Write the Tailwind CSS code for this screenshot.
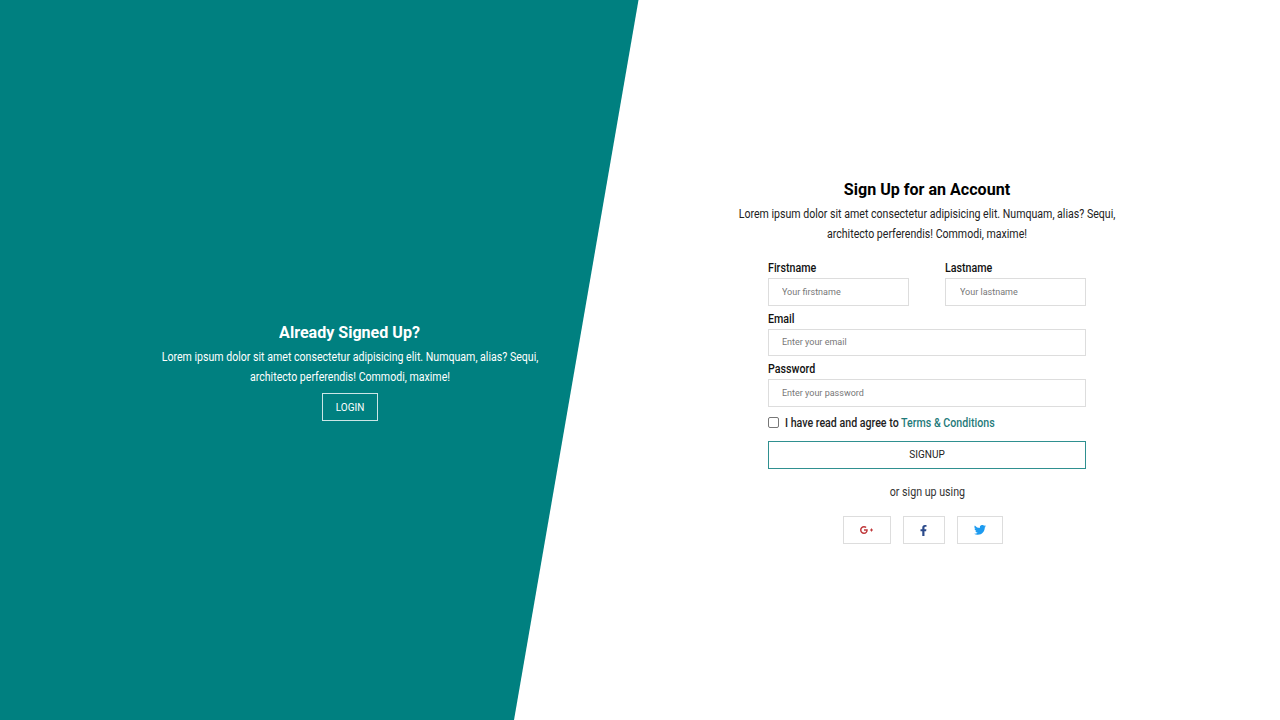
<!DOCTYPE html>
<html>
<head>
<meta charset="utf-8">
<script src="https://cdn.jsdelivr.net/npm/@tailwindcss/browser@4"></script>
</head>
<body class="m-0 bg-white font-['Roboto',sans-serif]">
<div class="relative flex h-[720px] w-[1280px] overflow-hidden bg-white">
  <div class="absolute inset-0 bg-[#008080] [clip-path:polygon(0_0,638.5px_0,514px_720px,0_720px)]"></div>
  <section class="relative flex w-[574px] flex-col items-center pl-[126px] pt-[321px] text-center text-white">
    <h2 class="scale-x-[.945] text-[17px] leading-[22px] font-bold">Already Signed Up?</h2>
    <p class="mt-[4px] w-[434px] shrink-0 scale-x-[.883] text-[12px] leading-[20px]">Lorem ipsum dolor sit amet consectetur adipisicing elit. Numquam, alias? Sequi, architecto perferendis! Commodi, maxime!</p>
    <button class="mt-[6px] h-[28px] w-[56px] border border-white/80 text-[10px] text-white">LOGIN</button>
  </section>
  <section class="relative flex flex-1 flex-col items-center pt-[178px] text-center">
    <h2 class="scale-x-[.945] text-[17px] leading-[22px] font-bold text-black">Sign Up for an Account</h2>
    <p class="mt-[4px] w-[434px] shrink-0 scale-x-[.883] text-[12px] leading-[20px] text-[#222]">Lorem ipsum dolor sit amet consectetur adipisicing elit. Numquam, alias? Sequi, architecto perferendis! Commodi, maxime!</p>
    <form class="mt-[16px] flex w-[318px] flex-col text-left">
      <div class="grid grid-cols-[141px_141px] justify-between">
        <label class="flex flex-col"><span class="origin-left scale-x-[.89] text-[12px] leading-[16px] font-medium text-[#111]">Firstname</span><input class="mt-[2px] h-[27.5px] w-full border border-[#ddd] px-[13px] text-[9px] placeholder:text-[#777]" placeholder="Your firstname"></label>
        <label class="flex flex-col"><span class="origin-left scale-x-[.89] text-[12px] leading-[16px] font-medium text-[#111]">Lastname</span><input class="mt-[2px] h-[27.5px] w-full border border-[#ddd] px-[14px] text-[9px] placeholder:text-[#777]" placeholder="Your lastname"></label>
      </div>
      <label class="mt-[5px] flex flex-col"><span class="origin-left scale-x-[.89] text-[12px] leading-[16px] font-medium text-[#111]">Email</span><input class="mt-[2px] h-[27.5px] w-full border border-[#ddd] px-[13px] text-[9px] placeholder:text-[#777]" placeholder="Enter your email"></label>
      <label class="mt-[5px] flex flex-col"><span class="origin-left scale-x-[.89] text-[12px] leading-[16px] font-medium text-[#111]">Password</span><input class="mt-[2px] h-[27.5px] w-full border border-[#ddd] px-[13px] text-[9px] placeholder:text-[#777]" placeholder="Enter your password"></label>
      <div class="mt-[8px] flex h-[16px] items-center text-[12px] font-medium text-[#222]">
        <span class="h-[11px] w-[11px] shrink-0 rounded-[2px] border border-[#777] bg-white"></span>
        <span class="ml-[6px] origin-left scale-x-[.886] whitespace-nowrap">I have read and agree to <span class="text-[#1f7a7a]">Terms &amp; Conditions</span></span>
      </div>
      <button type="button" class="mt-[10.5px] h-[27.5px] w-full border border-[#2f9090] text-[10px] text-[#222]">SIGNUP</button>
    </form>
    <p class="mt-[15px] scale-x-[.89] text-[12px] leading-[16px] text-[#333]">or sign up using</p>
    <div class="mt-[16.5px] mr-[9px] flex gap-[12px]">
      <a class="flex h-[28px] w-[48px] items-center justify-center border border-[#ddd]">
        <svg width="15" height="10" viewBox="0 0 30 20" fill="#c0393b"><path d="M10 2c2.300 0 4 .9 5.200 2l-2.100 2.100C12.300 5.300 11.300 4.900 10 4.900c-2.900 0-5 2.300-5 5.100s2.100 5.100 5 5.100c3 0 4.300-2 4.500-3.600H10V8.700h7.400c.1.500.2 1 .2 1.500C17.600 15 14.500 18 10 18c-4.600 0-8-3.600-8-8s3.400-8 8-8z"/><path d="M24 7h2v2h2v2h-2v2h-2v-2h-2V9h2z"/></svg>
      </a>
      <a class="flex h-[28px] w-[42px] items-center justify-center border border-[#ddd]">
        <svg width="7" height="13" viewBox="0 0 320 512" fill="#2b4a8b"><path d="M279 288l14-93h-89v-60c0-25 12-50 52-50h41V7s-37-7-72-7c-73 0-121 44-121 125v70H23v93h81v224h100V288z"/></svg>
      </a>
      <a class="flex h-[28px] w-[46px] items-center justify-center border border-[#ddd]">
        <svg width="12" height="10" viewBox="0 0 24 20" fill="#1d9bf0"><path d="M24 2.400a9.800 9.800 0 0 1-2.800.8A5 5 0 0 0 23.300.500a9.800 9.800 0 0 1-3.100 1.200 4.900 4.900 0 0 0-8.400 4.500A14 14 0 0 1 1.700.900a4.900 4.900 0 0 0 1.500 6.600 4.900 4.900 0 0 1-2.200-.6c0 2.300 1.600 4.400 3.900 4.900a4.900 4.900 0 0 1-2.200.1 4.900 4.900 0 0 0 4.600 3.400A9.900 9.900 0 0 1 0 17.300 14 14 0 0 0 7.500 19.500c9.100 0 14.300-7.700 14-14.600A10 10 0 0 0 24 2.400z"/></svg>
      </a>
    </div>
  </section>
</div>
</body>
</html>
